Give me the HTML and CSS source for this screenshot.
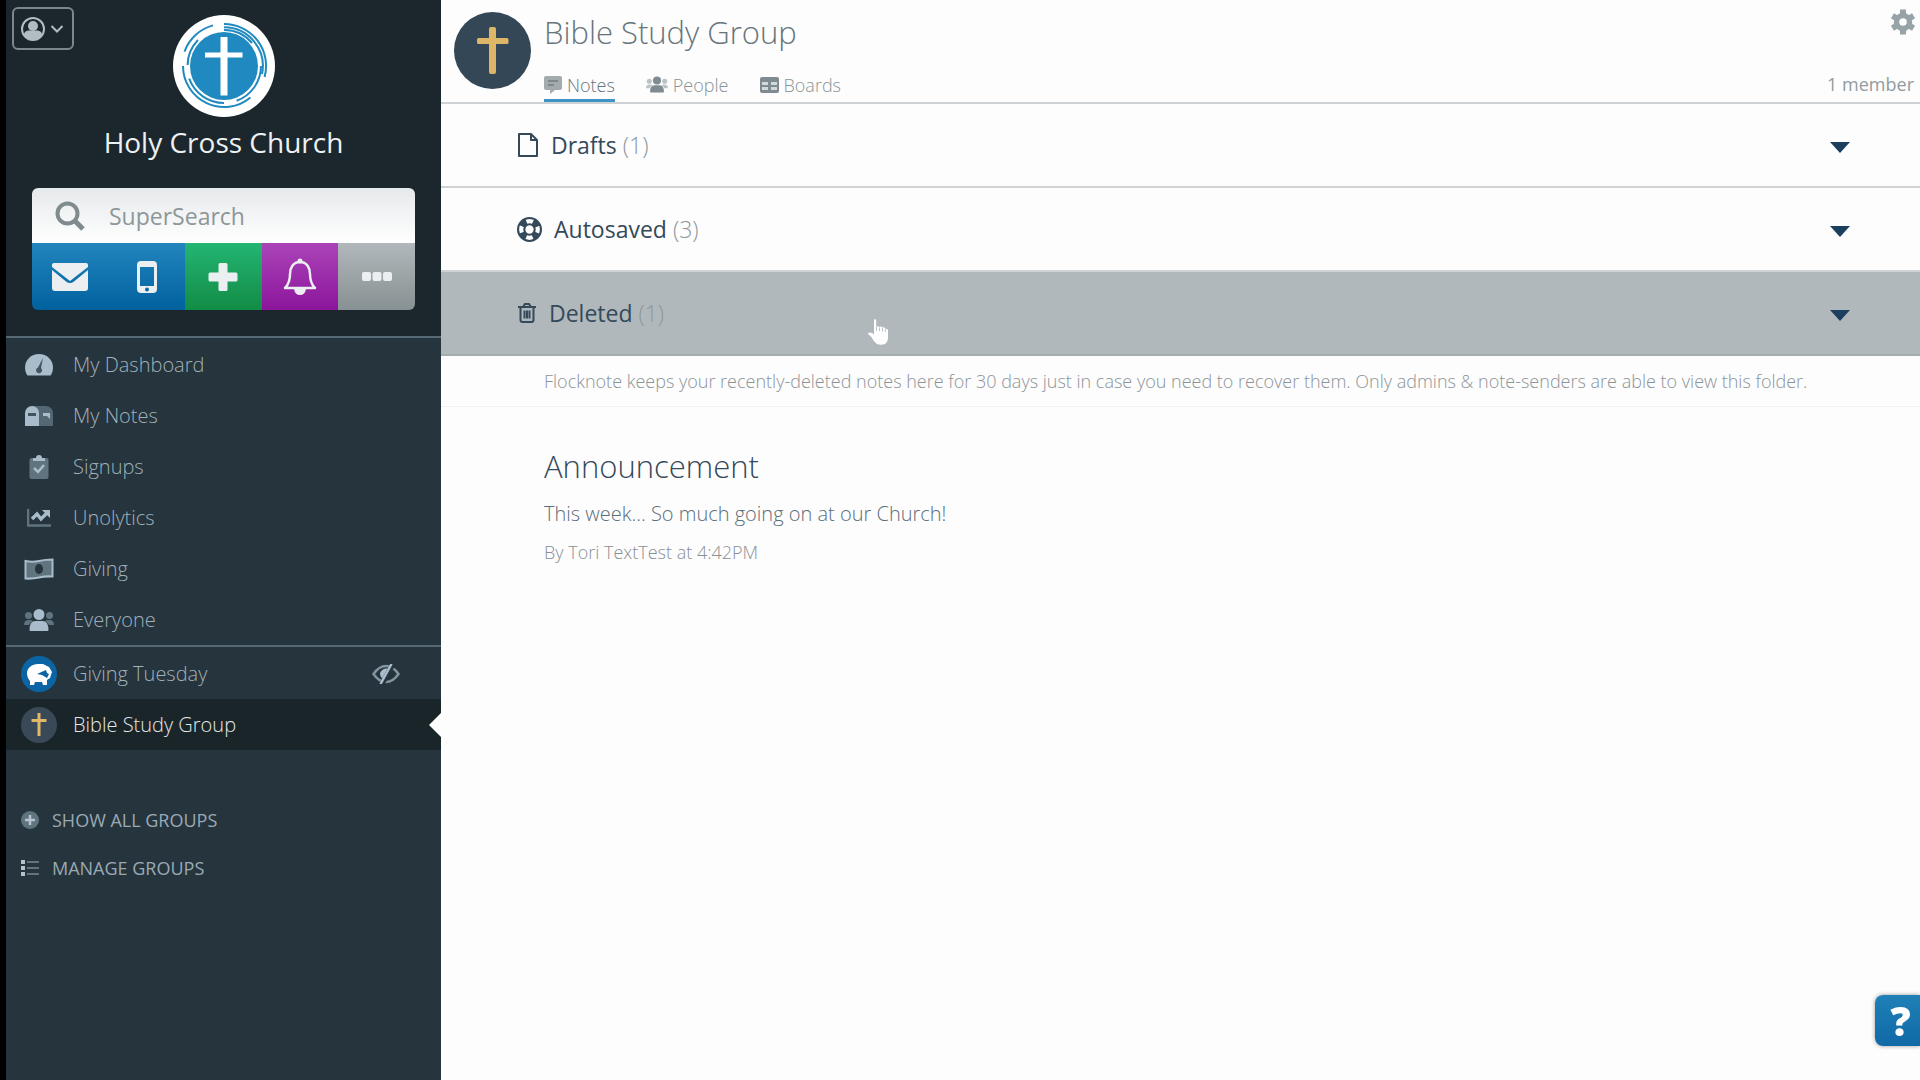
FILE: index.html
```html
<!DOCTYPE html>
<html lang="en">

<head>
  <meta charset="UTF-8">
  <meta name="viewport" content="width=device-width, initial-scale=1.0">
  <title>Bible Study Group - Holy Cross Church</title>
  <link rel="stylesheet" href="styles.css">
</head>

<body>
  <aside class="sidebar">
    <div class="sidebar-top">
      <button class="account-btn" type="button" aria-label="Account">
        <svg width="24" height="24" viewBox="0 0 24 24">
          <circle cx="12" cy="12" r="11" fill="none" stroke="currentColor" stroke-width="2"/>
          <circle cx="12" cy="9" r="5" fill="currentColor"/>
          <path d="M3 18c0-3.500 3-4.500 5-4.500h8c2 0 5 1 5 4.500-2 3.500-5 5-9 5s-7-1.500-9-5z" fill="currentColor"/>
        </svg>
        <svg width="14" height="10" viewBox="0 0 14 10">
          <path d="M1.500 2l5.500 5.500L12.500 2" fill="none" stroke="currentColor" stroke-width="2"/>
        </svg>
      </button>
      <svg class="church-logo" width="102" height="102" viewBox="0 0 102 102">
        <circle cx="51" cy="51" r="51" fill="#fff"/>
        <circle cx="51" cy="51" r="34" fill="#2089c0"/>
        <g fill="none" stroke="#2089c0" stroke-width="2">
          <path d="M51 9A42 42 0 0 1 91.600 62"/>
          <path d="M51 12.200A38.800 38.800 0 0 1 89 59"/>
          <path d="M51 15A36 36 0 0 1 79 28"/>
          <path d="M88 51A37 37 0 0 1 63.600 85.800"/>
          <path d="M77.400 82.400A41 41 0 0 1 10 51"/>
          <path d="M51 88A37 37 0 0 1 16.200 63.700"/>
          <path d="M14.600 50A36.500 36.500 0 0 1 25 25"/>
          <path d="M11.500 36.600A42 42 0 0 1 40 10.400"/>
        </g>
        <path d="M47.500 22h7v15.500h15v5h-15v38h-7v-38H32v-5h15.500z" fill="#fff"/>
      </svg>
      <div class="church-name">Holy Cross Church</div>

      <div class="search-box">
        <label class="search-field">
          <svg width="30" height="30" viewBox="0 0 30 30" aria-label="Search">
            <circle cx="12.500" cy="12.500" r="10" fill="none" stroke="currentColor" stroke-width="4"/>
            <path d="M20 20l8 8" stroke="currentColor" stroke-width="5"/>
          </svg>
          <input type="text" placeholder="SuperSearch">
        </label>
        <div class="quick-actions">
          <button class="blue" type="button" aria-label="Email">
            <svg width="38" height="30" viewBox="0 0 38 30">
              <path d="M3 1h32a2 2 0 0 1 2 2v2L19 19 1 5V3a2 2 0 0 1 2-2z" fill="currentColor"/>
              <path d="M1 8l14 11.500q4 3 8 0L37 8v18a3 3 0 0 1-3 3H4a3 3 0 0 1-3-3z" fill="currentColor"/>
            </svg>
          </button>
          <button class="blue" type="button" aria-label="Text">
            <svg width="20" height="32" viewBox="0 0 20 32">
              <path fill-rule="evenodd" d="M4 0h12a4 4 0 0 1 4 4v24a4 4 0 0 1-4 4H4a4 4 0 0 1-4-4V4a4 4 0 0 1 4-4zM3 6v19h14V6zM10 26.500a2 2 0 1 0 0 4 2 2 0 0 0 0-4z" fill="currentColor"/>
            </svg>
          </button>
          <button class="green" type="button" aria-label="Add">
            <svg width="30" height="30" viewBox="0 0 30 30">
              <path d="M12 1h6q1.500 0 1.500 1.500v8H28q1.500 0 1.500 1.500v6q0 1.500-1.500 1.500h-8.500v8q0 1.500-1.500 1.500h-6q-1.500 0-1.500-1.500v-8H2Q.5 19.500.5 18v-6Q.5 10.500 2 10.500h8.500v-8Q10.500 1 12 1z" fill="currentColor"/>
            </svg>
          </button>
          <button class="purple" type="button" aria-label="Notifications">
            <svg width="34" height="38" viewBox="0 0 34 38">
              <circle cx="17" cy="3" r="2.500" fill="currentColor"/>
              <path d="M17 4c-7 0-10 6-10 12 0 7-2 11-5 14h30c-3-3-5-7-5-14 0-6-3-12-10-12z" fill="none" stroke="currentColor" stroke-width="2.500" stroke-linejoin="round"/>
              <path d="M11 31h12q-1 6-6 6t-6-6z" fill="currentColor"/>
            </svg>
          </button>
          <button class="gray" type="button" aria-label="More">
            <svg width="30" height="9" viewBox="0 0 30 9" fill="currentColor">
              <rect x="0" y="0" width="9" height="9" rx="2"/>
              <rect x="10.500" y="0" width="9" height="9" rx="2"/>
              <rect x="21" y="0" width="9" height="9" rx="2"/>
            </svg>
          </button>
        </div>
      </div>
    </div>

    <nav class="side-nav">
      <a href="#">
        <svg width="28" height="22" viewBox="0 0 28 22">
          <path d="M14 0C6 0 0 6 0 13.500 0 17 1 19.500 2.500 21.500h23C27 19.500 28 17 28 13.500 28 6 22 0 14 0z" fill="#a9bccb"/>
          <path d="M18 4l-2 10a3 3 0 1 1-3-.5z" fill="#43535f"/>
        </svg>
        <span>My Dashboard</span>
      </a>
      <a href="#">
        <svg width="28" height="20" viewBox="0 0 28 20">
          <path d="M7 0h13q8 0 8 8v12H12z" fill="#536872"/>
          <path d="M0 20V7a7 7 0 0 1 14 0v13z" fill="#a9bccb"/>
          <rect x="3" y="7" width="8" height="3" fill="#43535f"/>
          <path d="M18 7h7v6l-3-3h-4z" fill="#a9bccb"/>
        </svg>
        <span>My Notes</span>
      </a>
      <a href="#">
        <svg width="20" height="25" viewBox="0 0 20 25">
          <rect x="0.500" y="4" width="19" height="21" rx="2" fill="#60747f"/>
          <path d="M4 7V4h3a3 3 0 0 1 6 0h3v3z" fill="#a9bccb"/>
          <path d="M5 14l4 4 6-7" fill="none" stroke="#a9bccb" stroke-width="2.500"/>
        </svg>
        <span>Signups</span>
      </a>
      <a href="#">
        <svg width="24" height="18" viewBox="0 0 24 18">
          <path d="M1 0v16.500h23" fill="none" stroke="#60747f" stroke-width="2.500"/>
          <path d="M5 10l5-5 4 5 6-6" fill="none" stroke="#a9bccb" stroke-width="3.500"/>
          <path d="M15 1h8v8z" fill="#a9bccb"/>
        </svg>
        <span>Unolytics</span>
      </a>
      <a href="#">
        <svg width="30" height="22" viewBox="0 0 30 22">
          <path d="M1.500 3q7 1.500 13.500 0t13.500-1.500v17q-7-.5-13.500 1T1.500 20.500z" fill="#60747f" stroke="#a9bccb" stroke-width="2"/>
          <ellipse cx="15" cy="11" rx="4" ry="5" fill="#25343d"/>
        </svg>
        <span>Giving</span>
      </a>
      <a href="#">
        <svg width="30" height="22" viewBox="0 0 30 22">
          <g fill="#60747f">
            <circle cx="4.500" cy="6.500" r="3.500"/><circle cx="25.500" cy="6.500" r="3.500"/>
            <path d="M0 16q0-5 5-5 3 0 4 1-3 2-4 4zM30 16q0-5-5-5-3 0-4 1 3 2 4 4z"/>
          </g>
          <circle cx="15" cy="5.500" r="5.500" fill="#a9bccb"/>
          <path d="M5.500 21q0-9 6-9h7q6 0 6 9 0 1-1 1h-17q-1 0-1-1z" fill="#a9bccb"/>
        </svg>
        <span>Everyone</span>
      </a>
    </nav>

    <nav class="side-nav group-nav">
      <a href="#">
        <svg width="36" height="36" viewBox="0 0 36 36">
          <circle cx="18" cy="18" r="18" fill="#0b64a4"/>
          <path d="M6 17c0-5 5-9 11-9h5l6 3 3 5-2 6-3 2v5h-4l-1-3h-7l-1 3H9v-4c-2-2-3-5-3-8z" fill="#fff"/>
          <path d="M16 18l9-4 1 3 2 1-2 4-5-3z" fill="#0b64a4"/>
        </svg>
        <span>Giving Tuesday</span>
        <svg class="hidden-icon" width="28" height="20" viewBox="0 0 28 20">
          <path d="M1.500 10Q7 2 14 2t12.500 8Q21 18 14 18T1.500 10z" fill="none" stroke="#82939e" stroke-width="2.500"/>
          <path d="M8 9q3-6 9-4l-6 10q-3-2-3-6z" fill="#a9bccb"/>
          <path d="M21 0L10 20" stroke="#25343d" stroke-width="5"/>
          <path d="M19.500 0L8.500 20" stroke="#a9bccb" stroke-width="2.500"/>
        </svg>
      </a>
      <a class="active" href="#">
        <svg width="36" height="36" viewBox="0 0 36 36">
          <circle cx="18" cy="18" r="18" fill="#394957"/>
          <path d="M16.500 6h3v6h6v3h-6v14h-3V15h-6v-3h6z" fill="#e0b867"/>
        </svg>
        <span>Bible Study Group</span>
      </a>
    </nav>

    <nav class="group-tools">
      <a href="#">
        <svg width="18" height="18" viewBox="0 0 18 18">
          <circle cx="9" cy="9" r="9" fill="#60747f"/>
          <path d="M9 4v10M4 9h10" stroke="#b5c3ce" stroke-width="2.500"/>
        </svg>
        <span>Show all groups</span>
      </a>
      <a href="#">
        <svg width="18" height="16" viewBox="0 0 18 16">
          <path d="M0 0h4v4H0zM0 6h4v4H0zM0 12h4v4H0z" fill="#b5c3ce"/>
          <path d="M6 2h12M6 8h12M6 14h12" stroke="#60747f" stroke-width="2"/>
        </svg>
        <span>Manage groups</span>
      </a>
    </nav>
  </aside>

  <main class="main">
    <header class="group-header">
      <svg class="group-avatar" width="77" height="77" viewBox="0 0 77 77">
        <circle cx="38.500" cy="38.500" r="38.500" fill="#334757"/>
        <path d="M37 15h3q2 0 2 2v9h11q1.500 0 1.500 1.500v3q0 1.500-1.500 1.500H42v28q0 2-2 2h-3q-2 0-2-2V32H24.500q-1.500 0-1.500-1.500v-3q0-1.500 1.500-1.500H35v-9q0-2 2-2z" fill="#deb668"/>
      </svg>
      <div class="group-info">
        <h1>Bible Study Group</h1>
        <nav class="tabs">
          <a class="active" href="#">
            <svg width="18" height="18" viewBox="0 0 18 18">
              <path d="M2 0h14q2 0 2 2v10q0 2-2 2h-5l-5 4v-4H2q-2 0-2-2V2q0-2 2-2z" fill="#a3abae"/>
              <path d="M4 5h10M4 9h6" stroke="#7f898d" stroke-width="2"/>
            </svg>
            <span>Notes</span>
          </a>
          <a href="#">
            <svg width="22" height="17" viewBox="0 0 30 22">
              <g fill="#bcc3c6">
                <circle cx="4.500" cy="6.500" r="3.500"/><circle cx="25.500" cy="6.500" r="3.500"/>
                <path d="M0 16q0-5 5-5 3 0 4 1-3 2-4 4zM30 16q0-5-5-5-3 0-4 1 3 2 4 4z"/>
              </g>
              <circle cx="15" cy="5.500" r="5.500" fill="#7f8b90"/>
              <path d="M5.500 21q0-9 6-9h7q6 0 6 9 0 1-1 1h-17q-1 0-1-1z" fill="#7f8b90"/>
            </svg>
            <span>People</span>
          </a>
          <a href="#">
            <svg width="19" height="16" viewBox="0 0 19 16">
              <rect width="19" height="16" rx="2" fill="#7f8b90"/>
              <path d="M2 5h6v3H2zM11 5h6v3h-6zM2 10h6v3H2zM11 10h6v3h-6z" fill="#d3d8da"/>
            </svg>
            <span>Boards</span>
          </a>
        </nav>
      </div>
      <div class="group-side">
        <button class="settings-btn" type="button" aria-label="Settings">
          <svg width="24" height="26" viewBox="0 0 24 26">
            <g fill="none" stroke="currentColor" stroke-width="6">
              <circle cx="12" cy="13" r="6.500" stroke-width="5.500"/>
              <path d="M12 .5v6M12 19.500v6M1.400 6.800l4.600 2.700M18 16.500l4.600 2.700M1.400 19.200L6 16.500M18 9.500l4.600-2.700"/>
            </g>
          </svg>
        </button>
        <div class="member-count">1 member</div>
      </div>
    </header>

    <section class="folders">
      <button class="folder" type="button">
        <svg width="22" height="26" viewBox="0 0 22 26">
          <path d="M2 2h12l6 6v16H2zM14 2v6h6" fill="none" stroke="currentColor" stroke-width="2" stroke-linejoin="round"/>
        </svg>
        <span>Drafts <span class="count">(1)</span></span>
        <span class="caret"></span>
      </button>
      <button class="folder" type="button">
        <svg width="25" height="25" viewBox="0 0 24 24">
          <circle cx="12" cy="12" r="8" fill="none" stroke="currentColor" stroke-width="6" stroke-dasharray="6.280 6.280" stroke-dashoffset="-3.140"/>
          <circle cx="12" cy="12" r="11" fill="none" stroke="currentColor" stroke-width="2"/>
          <circle cx="12" cy="12" r="5" fill="none" stroke="currentColor" stroke-width="2"/>
        </svg>
        <span>Autosaved <span class="count">(3)</span></span>
        <span class="caret"></span>
      </button>
      <button class="folder open" type="button">
        <svg width="20" height="20" viewBox="0 0 20 20">
          <path d="M1 4h18M6 4l2-3h4l2 3M3.500 4v13q0 2 2 2h9q2 0 2-2V4M7.500 7.500v8M10 7.500v8M12.500 7.500v8" fill="none" stroke="currentColor" stroke-width="2"/>
        </svg>
        <span>Deleted <span class="count">(1)</span></span>
        <span class="caret"></span>
      </button>
    </section>

    <p class="folder-hint">Flocknote keeps your recently-deleted notes here for 30 days just in case you need to recover them. Only admins &amp; note-senders are able to view this folder.</p>

    <article class="note">
      <h2>Announcement</h2>
      <p class="excerpt">This week... So much going on at our Church!</p>
      <p class="byline">By Tori TextTest at 4:42PM</p>
    </article>
  </main>

  <svg class="pointer" width="20" height="26" viewBox="0 0 20 26">
    <path d="M6 1.500q0-1.500 1-1.500t1.200 1.500V8q1.500-1.500 3 0 2-1 3 .5 2-1 3 1l2.800 1v8q0 4-3 6.500-4 1.500-8 0Q5 22 3.500 18L.5 15.500q-1-2 1-2 3 0 4.500 2z" fill="#fff"/>
    <path d="M8.500 8v4M11.500 8.500V12M14.500 9v3.500M17.300 10v3" stroke="#bcc1c5" stroke-width="1"/>
  </svg>

  <button class="help-btn" type="button">?</button>
</body>

</html>
```
FILE: styles.css
```css
* {
  box-sizing: border-box;
}

body {
  margin: 0;
  min-height: 100vh;
  display: flex;
  font-family: 'Open Sans', 'Noto Sans', sans-serif;
  font-weight: 300;
  background-color: #fdfdfd;
  color: #7f8c91;
}

button {
  font: inherit;
  border: none;
  cursor: pointer;
}

a {
  color: inherit;
  text-decoration: none;
}

svg {
  flex: none;
}

/* Sidebar */
.sidebar {
  width: 441px;
  flex: none;
  border-left: 6px solid #000000;
  background-color: #25343d;
}

.sidebar-top {
  position: relative;
  display: flex;
  flex-direction: column;
  align-items: center;
  padding: 15px 26px 26px;
  background-color: #1b272c;
  border-bottom: 2px solid #566874;
}

.account-btn {
  position: absolute;
  top: 7px;
  left: 6px;
  display: flex;
  align-items: center;
  gap: 5px;
  width: 62px;
  height: 43px;
  padding: 0 7px;
  background: none;
  border: 2px solid #7b878c;
  border-radius: 6px;
  color: #b3bcc0;
}

.church-name {
  margin: 5px 0 26px;
  font-size: 28px;
  line-height: 40px;
  font-weight: 400;
  color: #eef1f2;
}

.search-box {
  width: 100%;
  border-radius: 6px;
  overflow: hidden;
}

.search-field {
  display: flex;
  align-items: center;
  gap: 24px;
  height: 55px;
  padding: 0 23px;
  background: linear-gradient(#e6e9eb, #ffffff);
  color: #7f8b8d;
}

.search-field input {
  flex: 1;
  min-width: 0;
  padding: 0;
  border: none;
  outline: none;
  background: none;
  font: inherit;
  font-weight: 400;
  font-size: 23px;
  color: inherit;
}

.search-field input::placeholder {
  color: #8d9799;
  opacity: 1;
}

.quick-actions {
  display: flex;
}

.quick-actions button {
  flex: 1;
  display: flex;
  align-items: center;
  justify-content: center;
  height: 67px;
  padding: 0;
  color: #eceff1;
}

.blue {
  background: linear-gradient(#2385bd, #00619f);
}

.green {
  background: linear-gradient(#23b573, #128c45);
}

.purple {
  background: linear-gradient(#aa44b8, #8c159b);
}

.gray {
  background: linear-gradient(#b1b8bb, #879092);
}

.side-nav {
  padding-top: 1px;
}

.side-nav a {
  position: relative;
  display: flex;
  align-items: center;
  height: 51px;
  padding-left: 67px;
  font-size: 20px;
  color: #a1b0b9;
}

.side-nav a svg:first-child {
  position: absolute;
  left: 33px;
  transform: translateX(-50%);
}

.group-nav {
  border-top: 2px solid #566874;
}

.side-nav a.active {
  background-color: #1a2529;
  color: #e3e7e9;
}

.side-nav a.active::after {
  content: "";
  position: absolute;
  right: 0;
  border: 12px solid transparent;
  border-right-color: #fdfdfd;
  border-left-width: 0;
}

.hidden-icon {
  margin-left: auto;
  margin-right: 41px;
}

.group-tools {
  padding: 46px 15px;
}

.group-tools a {
  display: flex;
  align-items: center;
  gap: 13px;
  height: 48px;
  font-size: 18px;
  font-weight: 400;
  text-transform: uppercase;
  color: #9aaab4;
}

/* Main column */
.main {
  flex: 1;
  min-width: 0;
}

.group-header {
  display: flex;
  padding: 12px 6px 0 13px;
  border-bottom: 2px solid #cfd2d4;
}

.group-info {
  flex: 1;
  margin-left: 13px;
}

h1 {
  margin: 0;
  font-size: 31px;
  line-height: 40px;
  font-weight: 300;
  color: #66757c;
}

.tabs {
  display: flex;
  gap: 31px;
  margin-top: 18px;
}

.tabs a {
  display: flex;
  align-items: center;
  gap: 5px;
  height: 32px;
  font-size: 18px;
  color: #899498;
  border-bottom: 3px solid transparent;
}

.tabs a.active {
  color: #66757c;
  border-bottom-color: #3d94c8;
}

.group-side {
  display: flex;
  flex-direction: column;
  justify-content: space-between;
  align-items: flex-end;
  padding-bottom: 6px;
}

.settings-btn {
  display: flex;
  margin: -3px -1px 0 0;
  padding: 0;
  background: none;
  color: #97a3a7;
}

.member-count {
  font-size: 18px;
  line-height: 24px;
  font-weight: 400;
  color: #929b9f;
}

.folder {
  display: flex;
  align-items: center;
  gap: 12px;
  width: 100%;
  height: 84px;
  padding: 0 70px 0 76px;
  font-size: 23px;
  font-weight: 400;
  text-align: left;
  background: none;
  border-bottom: 2px solid #d0d3d5;
  color: #34495a;
}

.folder.open {
  background-color: #b0b8bc;
  border-color: #a4acb0;
}

.count {
  font-weight: 300;
  color: #8e989c;
}

.caret {
  margin-top: 4px;
  margin-left: auto;
  border: 10px solid transparent;
  border-top: 11px solid #1c3f5e;
  border-bottom: none;
}

.folder-hint {
  margin: 0;
  padding: 13px 103px 12px;
  font-size: 18px;
  line-height: 25px;
  color: #8c9498;
  border-bottom: 1px solid #f0f2f3;
}

.note {
  padding: 39px 103px;
}

.note h2 {
  margin: 0;
  font-size: 31px;
  line-height: 40px;
  font-weight: 300;
  color: #34495a;
}

.note p {
  margin: 0;
}

.note .excerpt {
  margin-top: 13px;
  font-size: 20px;
  line-height: 30px;
  color: #5b6d7a;
}

.note .byline {
  margin-top: 10px;
  font-size: 18px;
  line-height: 26px;
  color: #889195;
}

.pointer {
  position: absolute;
  left: 868px;
  top: 319px;
}

.help-btn {
  position: fixed;
  right: 0;
  bottom: 34px;
  width: 45px;
  height: 51px;
  padding: 0 0 0 6px;
  border-radius: 8px 0 0 8px;
  background: linear-gradient(#2080b7, #0f69a5);
  box-shadow: 0 0 4px rgba(0, 0, 0, 0.4);
  font-size: 40px;
  line-height: 48px;
  font-weight: 800;
  color: #ffffff;
}
```
